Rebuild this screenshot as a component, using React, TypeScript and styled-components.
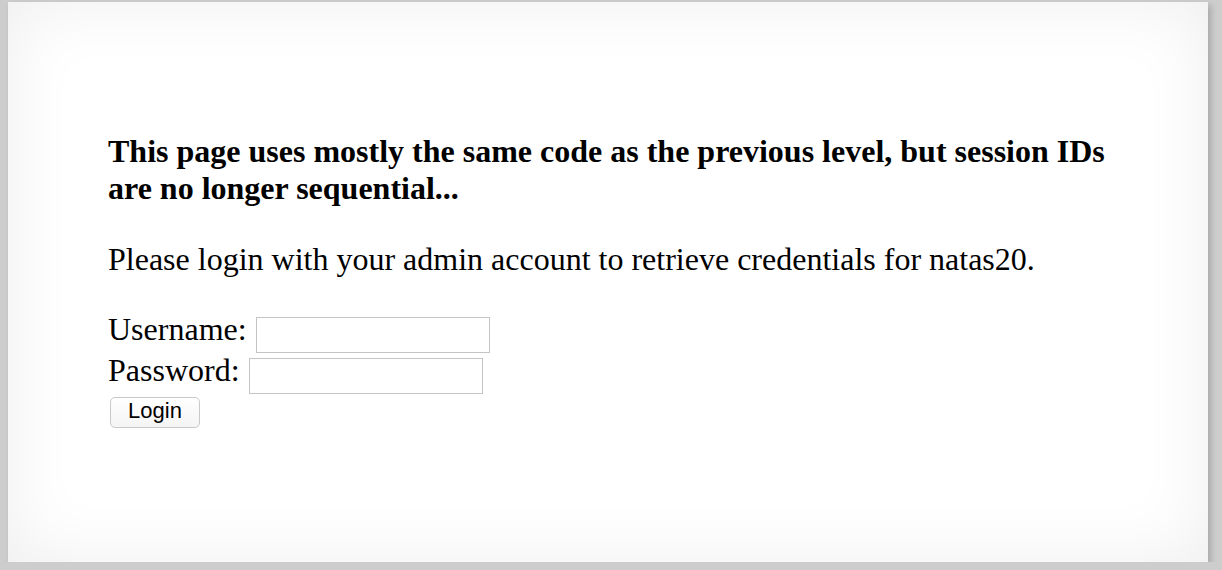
import React from 'react';
import styled, { createGlobalStyle } from 'styled-components';

const GlobalStyle = createGlobalStyle`
  html, body {
    margin: 0;
    padding: 0;
    background: #cdcdcd;
    overflow: hidden;
  }
`;

/**
 * Browser window page, with the soft inner vignette.
 */
const Page = styled.div`
  box-sizing: border-box;
  margin: 2px 0 0 8px;
  width: 1200px;
  height: 560px;
  background: #ffffff;
  box-shadow: inset 0 0 70px rgba(0, 0, 0, 0.07), 3px 3px 6px rgba(0, 0, 0, 0.18);
  padding: 131px 0 0 100px;
  font-family: 'Liberation Serif', 'Times New Roman', serif;
  font-size: 32px;
  color: #000;
`;

const Content = styled.div`
  width: 1010px;
`;

const Notice = styled.p`
  margin: 0;
  font-weight: bold;
  line-height: 37px;
`;

const Intro = styled.p`
  margin: 34px 0 0;
  line-height: 37px;
`;

const Form = styled.form`
  margin: 36px 0 0;
`;

const Row = styled.div`
  display: flex;
  align-items: center;
  gap: 9px;
  height: 41px;
`;

const Label = styled.span`
  line-height: 37px;
  margin-bottom: 10px;
`;

const Field = styled.input`
  box-sizing: border-box;
  width: 234px;
  height: 36px;
  border: 1px solid #c4c4c4;
  background: #fff;
  padding: 2px 4px;
  font-size: 20px;
  outline: none;
`;

const Button = styled.button`
  display: block;
  margin: 1px 0 0 2px;
  width: 90px;
  height: 31px;
  background: linear-gradient(#ffffff, #f4f4f4);
  border: 1px solid #c9c9c9;
  border-radius: 5px;
  font-family: 'Liberation Sans', Arial, sans-serif;
  font-size: 22px;
  line-height: 25px;
  color: #000;
  padding: 0 0 4px;
`;

const App: React.FC = () => {
  return (
    <>
      <GlobalStyle />
      <Page>
        <Content>
          <Notice>
            This page uses mostly the same code as the previous level, but session IDs are no
            longer sequential...
          </Notice>
          <Intro>Please login with your admin account to retrieve credentials for natas20.</Intro>
          <Form onSubmit={e => e.preventDefault()}>
            <Row>
              <Label>Username:</Label>
              <Field type="text" name="username" />
            </Row>
            <Row>
              <Label>Password:</Label>
              <Field type="password" name="password" />
            </Row>
            <Button type="submit">Login</Button>
          </Form>
        </Content>
      </Page>
    </>
  );
};

export default App;
